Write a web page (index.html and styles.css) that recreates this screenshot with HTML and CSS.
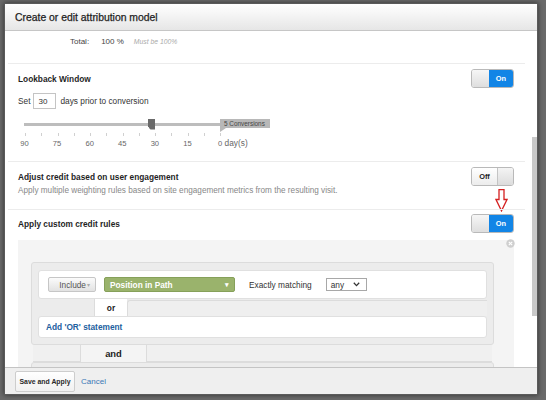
FILE: index.html
```html
<!DOCTYPE html>
<html>
<head>
<meta charset="utf-8">
<link rel="stylesheet" href="styles.css">
</head>
<body>
<div class="dialog">
  <div class="hd">Create or edit attribution model</div>
  <div class="bd">
    <div class="content">
      <div class="total-row">
        <span class="t-lbl">Total:</span>
        <span class="t-val">100 %</span>
        <span class="t-note">Must be 100%</span>
      </div>

      <div class="section lookback">
        <div class="row-head">
          <span class="sec-title">Lookback Window</span>
          <div class="toggle on"><span class="tg-grey"></span><span class="tg-blue">On</span></div>
        </div>
        <div class="set-row">Set <span class="num-input">30</span> days prior to conversion</div>
        <div class="slider">
          <div class="track"></div>
          <svg class="handle" width="7" height="11" viewBox="0 0 7 11"><path d="M0 0H7V10.5H2.5L0 8Z" fill="#6a6a6a"/><path d="M0.5 8.2V11" stroke="#fff" stroke-width="1"/></svg>
          <div class="flag">5 Conversions</div>
          <div class="flag-tail"></div>
        </div>
        <div class="ticks">
          <i></i><i></i><i></i><i></i><i></i><i></i><i></i><i></i><i></i><i></i><i></i><i></i><i></i>
        </div>
        <div class="labels">
          <span>90</span><span>75</span><span>60</span><span>45</span><span>30</span><span>15</span><span class="last"><b>0</b> day(s)</span>
        </div>
      </div>

      <div class="section engage">
        <div class="row-head">
          <span class="sec-title">Adjust credit based on user engagement</span>
          <div class="toggle off"><span class="tg-white">Off</span><span class="tg-grey2"></span></div>
        </div>
        <div class="desc">Apply multiple weighting rules based on site engagement metrics from the resulting visit.</div>
        <svg class="red-arrow" width="13" height="23" viewBox="0 0 13 23"><path d="M4 0.7H9V10.5H12L6.5 21.8L1 10.5H4Z" fill="#fff" stroke="#d42020" stroke-width="1.3" stroke-linejoin="miter"/></svg>
      </div>

      <div class="section custom">
        <div class="row-head">
          <span class="sec-title">Apply custom credit rules</span>
          <div class="toggle on"><span class="tg-grey"></span><span class="tg-blue">On</span></div>
        </div>
        <div class="panel">
          <svg class="close" width="9" height="9" viewBox="0 0 9 9"><circle cx="4.5" cy="4.5" r="4.2" fill="#cfcfcf"/><path d="M2.8 2.8L6.2 6.2M6.2 2.8L2.8 6.2" stroke="#fff" stroke-width="1.1"/></svg>
          <div class="group">
            <div class="rule-row">
              <span class="btn-include">Include<span class="caret-g">&#9662;</span></span>
              <span class="green-sel">Position in Path<span class="caret-w">&#9662;</span></span>
              <span class="match-lbl">Exactly matching</span>
              <span class="any-sel">any<svg width="7" height="5" viewBox="0 0 7 5"><path d="M0.8 0.8L3.5 3.6L6.2 0.8" fill="none" stroke="#333" stroke-width="1.3"/></svg></span>
            </div>
            <div class="or-row">
              <div class="or-side left"></div>
              <div class="or-tab">or</div>
              <div class="or-side right"></div>
            </div>
            <div class="add-row"><a class="add-link">Add 'OR' statement</a></div>
          </div>
          <div class="and-row">
            <div class="and-side left"></div>
            <div class="and-tab">and</div>
            <div class="and-side right"></div>
          </div>
          <div class="group group-next"></div>
        </div>
      </div>
    </div>
    <div class="scrollbar"><div class="thumb"></div></div>
  </div>
  <div class="ft">
    <span class="btn-save">Save and Apply</span>
    <a class="cancel">Cancel</a>
  </div>
</div>
</body>
</html>
```

FILE: styles.css
```css
* { box-sizing: border-box; }
html, body { margin: 0; padding: 0; }
body {
  width: 546px;
  height: 400px;
  overflow: hidden;
  background: #6a6a6a;
  font-family: "Liberation Sans", Arial, sans-serif;
  font-size: 8.3px;
  color: #333;
  padding: 3px 0 0 4px;
}
.dialog {
  width: 534px;
  height: 392px;
  background: #fff;
  border: 1px solid #5a5a5a;
  box-shadow: 0 0 5px rgba(0,0,0,0.55);
  display: flex;
  flex-direction: column;
}
.hd {
  height: 27px;
  border-bottom: 1px solid #c6c6c6;
  background: linear-gradient(#ffffff, #e6e6e6);
  padding-left: 10px;
  display: flex;
  align-items: center;
  font-size: 10.4px;
  color: #1e1e1e;
  -webkit-text-stroke: 0.25px #1e1e1e;
}
.bd {
  flex: 1;
  display: flex;
  overflow: hidden;
}
.content {
  flex: 1;
  overflow: hidden;
  padding: 0 7px 0 3px;
}
.scrollbar {
  width: 5px;
  background: #fff;
}
.thumb {
  margin-top: 106px;
  height: 179px;
  background: #c9c9c9;
}
.total-row {
  height: 20px;
  margin-bottom: 12px;
  display: flex;
  align-items: center;
  padding-left: 62px;
  color: #444;
  font-size: 8px;
}
.t-val { margin-left: 12px; }
.t-note { margin-left: 10px; font-style: italic; font-size: 6.8px; color: #aaa; }

.section {
  border-top: 1px solid #ececec;
  padding: 0 11px 0 10px;
  position: relative;
}
.row-head {
  height: 19px;
  display: flex;
  align-items: center;
  justify-content: space-between;
}
.sec-title { font-weight: bold; color: #1f1f1f; font-size: 8.3px; }

.toggle {
  width: 43px;
  height: 19px;
  border: 1px solid #b9b9b9;
  border-radius: 3px;
  overflow: hidden;
  display: flex;
  font-weight: bold;
  font-size: 7.4px;
}
.tg-grey { width: 17px; background: linear-gradient(#f6f6f6, #dedede); }
.tg-blue {
  flex: 1;
  background: #1285e6;
  color: #fff;
  display: flex;
  align-items: center;
  justify-content: center;
}
.tg-white {
  width: 25px;
  background: linear-gradient(#ffffff, #ececec);
  color: #222;
  display: flex;
  align-items: center;
  justify-content: center;
}
.tg-grey2 { flex: 1; border-left: 1px solid #c4c4c4; background: linear-gradient(#f4f4f4, #dcdcdc); }

.lookback { padding-top: 5px; padding-bottom: 13px; }
.set-row {
  margin-top: 5px;
  height: 16px;
  display: flex;
  align-items: center;
  color: #333;
}
.num-input {
  width: 23px;
  height: 16px;
  border: 1px solid #c4c4c4;
  margin: 0 4px 0 3px;
  padding: 2px 0 0 4px;
  font-size: 8px;
  line-height: 11px;
}
.slider {
  position: relative;
  margin: 10px 0 0 6px;
  height: 12px;
  width: 250px;
}
.track {
  position: absolute;
  left: 0;
  top: 4px;
  width: 196px;
  height: 3px;
  background: #bdbdbd;
}
.handle { position: absolute; left: 124px; top: 0; }
.flag {
  position: absolute;
  left: 196px;
  top: 0;
  width: 50px;
  height: 9px;
  background: #b8b8b8;
  color: #444;
  font-size: 6.4px;
  line-height: 9px;
  padding-left: 4px;
}
.flag-tail {
  position: absolute;
  left: 196px;
  top: 9px;
  width: 0;
  height: 0;
  border-top: 4px solid #b8b8b8;
  border-right: 6px solid transparent;
}
.ticks {
  margin: 2px 0 0 7px;
  width: 196px;
  height: 3px;
  display: flex;
  justify-content: space-between;
}
.ticks i { width: 1px; height: 3px; background: #d0d0d0; }
.labels {
  margin: 2px 0 0 -3.5px;
  height: 10px;
  display: flex;
  align-items: center;
  color: #666;
  font-size: 7.6px;
}
.labels span { width: 20px; margin-right: 12.6px; text-align: center; }
.labels span.last { width: auto; margin: 0 0 0 8px; text-align: left; font-size: 8.3px; }
.labels span.last b { font-weight: normal; font-size: 7.6px; }

.engage { padding-top: 5px; padding-bottom: 13px; }
.desc { height: 10px; line-height: 10px; color: #888; font-size: 8.2px; }
.red-arrow { position: absolute; right: 17px; top: 27px; }

.custom { padding-top: 4px; }
.panel {
  position: relative;
  margin-top: 7px;
  background: #f4f4f4;
  padding: 22px 20px 0 13px;
  height: 140px;
}
.close { position: absolute; right: -1px; top: -1px; }
.group {
  background: #ececec;
  border: 1px solid #dcdcdc;
  border-radius: 3px;
  padding: 7px 6px 6px 6px;
}
.rule-row {
  height: 29px;
  background: #fff;
  border: 1px solid #e0e0e0;
  border-radius: 3px;
  display: flex;
  align-items: center;
  padding-left: 9px;
}
.btn-include {
  width: 48px;
  height: 15px;
  border: 1px solid #c6c6c6;
  border-radius: 2px;
  background: linear-gradient(#fbfbfb, #e2e2e2);
  color: #555;
  display: flex;
  align-items: center;
  justify-content: flex-end;
  padding-right: 5px;
  font-size: 8.3px;
}
.caret-g { color: #aaa; font-size: 6px; margin-left: 1px; }
.green-sel {
  margin-left: 8px;
  width: 131px;
  height: 15px;
  border: 1px solid #86a05a;
  border-radius: 2px;
  background: #9ab36c;
  color: #fff;
  font-weight: bold;
  display: flex;
  align-items: center;
  justify-content: space-between;
  padding: 0 5px 0 5px;
}
.caret-w { font-size: 7px; }
.match-lbl { margin-left: 14px; color: #333; }
.any-sel {
  margin-left: 14px;
  width: 41px;
  height: 13px;
  border: 1px solid #a8a8a8;
  display: flex;
  align-items: center;
  justify-content: space-between;
  padding: 0 6px 0 4px;
  color: #333;
}
.or-row { height: 17px; display: flex; }
.or-side { background: #ececec; border: 1px solid #dcdcdc; border-top: none; }
.or-side.left { width: 57px; border-left: none; border-bottom: none; }
.or-side.right { flex: 1; border: 1px solid #dcdcdc; border-right: none; border-bottom: none; border-radius: 3px 0 0 0; background: #efefef; margin-top: 1px; }
.or-tab {
  width: 32px;
  background: #fff;
  display: flex;
  align-items: center;
  justify-content: center;
  font-weight: bold;
  color: #222;
}
.add-row {
  height: 22px;
  background: #fff;
  border: 1px solid #e0e0e0;
  border-radius: 3px;
  display: flex;
  align-items: center;
  padding-left: 7px;
}
.add-link { color: #21609e; font-weight: bold; }
.and-row { height: 17px; display: flex; margin: 0 2px; }
.and-side { background: #f0f0f0; border: 1px solid #dcdcdc; border-top: none; }
.and-side.left { width: 48px; border-left: none; }
.and-side.right { flex: 1; border-right: none; }
.and-tab {
  width: 65px;
  display: flex;
  align-items: center;
  justify-content: center;
  font-weight: bold;
  font-size: 9.4px;
  color: #222;
}
.group-next { height: 40px; }

.ft {
  height: 27px;
  border-top: 1px solid #c4c4c4;
  background: #efefef;
  display: flex;
  align-items: center;
  padding-left: 10px;
}
.btn-save {
  width: 60px;
  height: 21px;
  border: 1px solid #cdcdcd;
  border-radius: 2px;
  background: linear-gradient(#ffffff, #f1f1f1);
  font-weight: bold;
  font-size: 6.9px;
  color: #2a2a2a;
  display: flex;
  align-items: center;
  justify-content: center;
}
.cancel { margin-left: 6px; color: #3a78b6; font-size: 8px; }
```
